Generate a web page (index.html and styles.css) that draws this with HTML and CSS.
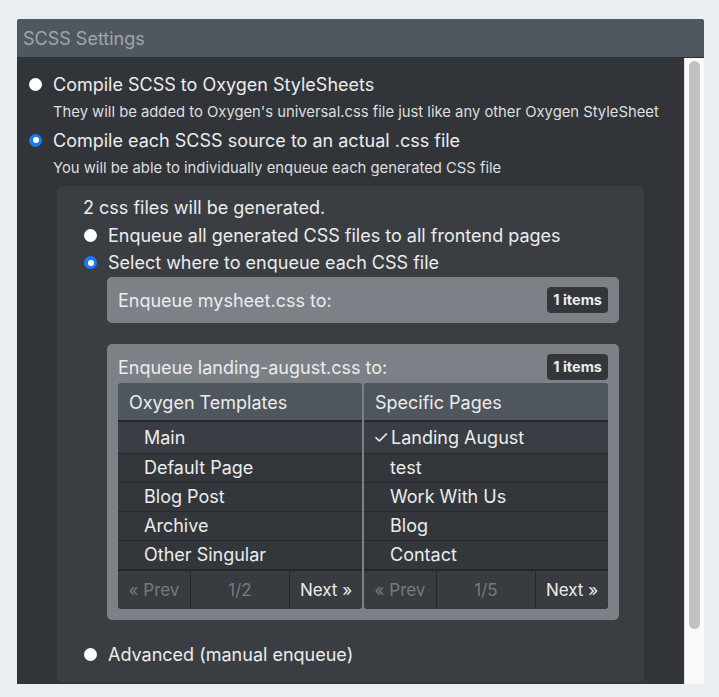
FILE: index.html
```html
<!DOCTYPE html>
<html lang="en">

<head>
    <meta charset="UTF-8">
    <meta name="viewport" content="width=device-width, initial-scale=1.0">
    <title>SCSS Settings</title>
    <link rel="stylesheet" href="styles.css">
</head>

<body>
    <div class="panel">
        <div class="panel-header">SCSS Settings</div>

        <div class="panel-body">
            <div class="panel-content">
                <div class="option">
                    <span class="radio"></span>
                    <span>Compile SCSS to Oxygen StyleSheets</span>
                </div>
                <p class="desc">They will be added to Oxygen's universal.css file just like any other Oxygen StyleSheet</p>
                <div class="option">
                    <span class="radio checked"></span>
                    <span>Compile each SCSS source to an actual .css file</span>
                </div>
                <p class="desc">You will be able to individually enqueue each generated CSS file</p>

                <div class="sub-section">
                    <div class="count">2 css files will be generated.</div>
                    <div class="option small">
                        <span class="radio"></span>
                        <span>Enqueue all generated CSS files to all frontend pages</span>
                    </div>
                    <div class="option small">
                        <span class="radio checked"></span>
                        <span>Select where to enqueue each CSS file</span>
                    </div>

                    <div class="sheet">
                        <div class="sheet-head">
                            <span>Enqueue mysheet.css to:</span>
                            <span class="badge">1 items</span>
                        </div>
                    </div>

                    <div class="sheet open">
                        <div class="sheet-head">
                            <span>Enqueue landing-august.css to:</span>
                            <span class="badge">1 items</span>
                        </div>

                        <div class="picker">
                            <div class="list">
                                <div class="list-title">Oxygen Templates</div>
                                <div class="list-item hover">Main</div>
                                <div class="list-item">Default Page</div>
                                <div class="list-item">Blog Post</div>
                                <div class="list-item">Archive</div>
                                <div class="list-item">Other Singular</div>
                                <div class="pager">
                                    <span class="pager-btn disabled">&laquo; Prev</span>
                                    <span class="pager-num">1/2</span>
                                    <span class="pager-btn">Next &raquo;</span>
                                </div>
                            </div>
                            <div class="list">
                                <div class="list-title">Specific Pages</div>
                                <div class="list-item selected"><span class="tick">&#10003;</span>Landing August</div>
                                <div class="list-item">test</div>
                                <div class="list-item">Work With Us</div>
                                <div class="list-item">Blog</div>
                                <div class="list-item">Contact</div>
                                <div class="pager">
                                    <span class="pager-btn disabled">&laquo; Prev</span>
                                    <span class="pager-num">1/5</span>
                                    <span class="pager-btn">Next &raquo;</span>
                                </div>
                            </div>
                        </div>
                    </div>

                    <div class="option small advanced">
                        <span class="radio"></span>
                        <span>Advanced (manual enqueue)</span>
                    </div>
                </div>
            </div>

            <div class="scrollbar">
                <div class="scrollbar-thumb"></div>
            </div>
        </div>
    </div>
</body>

</html>
```

FILE: styles.css
```css
:root {
    --page-bg: #e9eef2;
    --header-bg: #50585f;
    --body-bg: #31353a;
    --section-bg: #3a3e43;
    --sheet-bg: #7b8187;
    --badge-bg: #33373b;
    --row-bg: #33373c;
    --row-line: #24272b;
    --text: #ececec;
    --text-dim: #747a80;
    --accent: #1a7cf5;
}

* {
    box-sizing: border-box;
    margin: 0;
    padding: 0;
}

html,
body {
    background: var(--page-bg);
    height: 100%;
}

body {
    font-family: Inter, 'Noto Sans', sans-serif;
    color: var(--text);
    padding: 19px 15px 13px 17px;
}

.panel {
    height: 665px;
    display: flex;
    flex-direction: column;
    background: var(--body-bg);
    border-radius: 3px 3px 0 0;
    overflow: hidden;
}

.panel-header {
    height: 39px;
    flex-shrink: 0;
    display: flex;
    align-items: center;
    padding-left: 6px;
    background: var(--header-bg);
    border-bottom: 1px solid #2b2f33;
    color: #a0a5aa;
    font-size: 18px;
}

.panel-body {
    flex: 1;
    display: flex;
    min-height: 0;
}

.panel-content {
    flex: 1;
    overflow: hidden;
    padding-top: 13px;
}

.option {
    display: flex;
    align-items: center;
    height: 26px;
    padding-left: 12px;
    font-size: 18px;
    white-space: nowrap;
}

.radio {
    width: 13px;
    height: 13px;
    border-radius: 50%;
    background: #fff;
    margin-right: 11px;
    flex-shrink: 0;
}

.radio.checked {
    background: var(--accent);
    display: flex;
    align-items: center;
    justify-content: center;
}

.radio.checked::after {
    content: '';
    width: 6px;
    height: 6px;
    border-radius: 50%;
    background: #fff;
}

.desc {
    height: 30px;
    line-height: 30px;
    padding-left: 36px;
    font-size: 14.8px;
    color: #dedede;
    white-space: nowrap;
}

.sub-section {
    margin: 3px 0 0 40px;
    width: 587px;
    height: 496px;
    background: var(--section-bg);
    border-radius: 5px;
    padding: 8px 25px 0 26px;
}

.count {
    height: 28px;
    line-height: 28px;
    font-size: 18px;
}

.option.small {
    height: 27px;
    padding-left: 1px;
    font-size: 18px;
}

.sheet {
    margin: 1px 0 0 24px;
    background: var(--sheet-bg);
    border-radius: 5px;
}

.sheet + .sheet {
    margin-top: 21px;
}

.sheet-head {
    height: 46px;
    display: flex;
    align-items: center;
    justify-content: space-between;
    padding: 0 11px;
    font-size: 18px;
}

.sheet.open {
    padding: 10px 11px 11px;
}

.sheet.open .sheet-head {
    height: 26px;
    padding: 0;
    margin-bottom: 3px;
}

.badge {
    background: var(--badge-bg);
    border-radius: 4px;
    height: 26px;
    line-height: 26px;
    padding: 0 6px;
    font-size: 14.5px;
    font-weight: 700;
}

.picker {
    display: grid;
    grid-template-columns: 1fr 1fr;
    gap: 2px;
}

.list {
    background: var(--row-line);
    border-radius: 4px;
    overflow: hidden;
}

.list-title {
    height: 39px;
    line-height: 39px;
    padding-left: 11px;
    background: #4f565d;
    border-bottom: 2px solid var(--row-line);
    font-size: 18px;
}

.list-item {
    height: 29px;
    line-height: 28px;
    padding-left: 26px;
    background: var(--row-bg);
    border-bottom: 1px solid var(--row-line);
    font-size: 18px;
}

.list-title + .list-item {
    height: 32px;
    line-height: 31px;
}

.list-item.hover,
.list-item.selected {
    background: #3a3e44;
}

.list-item.selected {
    padding-left: 9px;
}

.tick {
    display: inline-block;
    width: 18px;
}

.pager {
    display: flex;
    height: 39px;
    background: #383c41;
    border-top: 1px solid var(--row-line);
    font-size: 17px;
}

.pager span {
    display: flex;
    align-items: center;
    justify-content: center;
}

.pager-btn {
    width: 72px;
}

.pager-num {
    flex: 1;
    border-left: 1px solid var(--row-line);
    border-right: 1px solid var(--row-line);
    color: var(--text-dim);
}

.pager-btn.disabled {
    color: var(--text-dim);
}

.option.advanced {
    margin-top: 21px;
}

.scrollbar {
    width: 20px;
    flex-shrink: 0;
    background: #fafafa;
    border-left: 1px solid #e2e2e2;
    padding: 3px 4px 0 4px;
}

.scrollbar-thumb {
    height: 568px;
    background: #c1c1c1;
    border-radius: 6px;
}
```
